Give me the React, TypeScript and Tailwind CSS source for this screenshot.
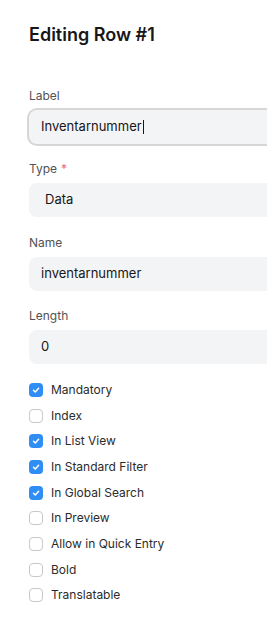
import React from 'react';

type CheckItem = { label: string; checked: boolean };

const checks: CheckItem[] = [
  { label: 'Mandatory', checked: true },
  { label: 'Index', checked: false },
  { label: 'In List View', checked: true },
  { label: 'In Standard Filter', checked: true },
  { label: 'In Global Search', checked: true },
  { label: 'In Preview', checked: false },
  { label: 'Allow in Quick Entry', checked: false },
  { label: 'Bold', checked: false },
  { label: 'Translatable', checked: false },
];

function FieldLabel({ children, required }: { children: React.ReactNode; required?: boolean }) {
  return (
    <div className="mb-1.5 h-4 text-xs leading-4 text-[#525252]">
      {children}
      {required && <span className="ml-1 text-[#f06a6a]">*</span>}
    </div>
  );
}

function Checkbox({ item }: { item: CheckItem }) {
  return (
    <div className="flex h-[25.7px] items-center gap-2">
      {item.checked ? (
        <span className="flex h-[14px] w-[14px] items-center justify-center rounded-[4px] bg-[#2f8ef4]">
          <svg width="10" height="10" viewBox="0 0 10 10" fill="none">
            <path d="M2.5 5.2 4.3 7 7.6 3.3" stroke="white" strokeWidth="1.5" strokeLinecap="round" strokeLinejoin="round" />
          </svg>
        </span>
      ) : (
        <span className="h-[14px] w-[14px] rounded-[4px] border border-[#c8c8c8] bg-white" />
      )}
      <span className="text-xs leading-4 text-[#2b2b2b]">{item.label}</span>
    </div>
  );
}

export default function App() {
  return (
    <div className="h-[623px] w-[267px] overflow-hidden bg-white" style={{ fontFamily: 'Inter, "Noto Sans", sans-serif' }}>
      <div className="w-[380px] pl-[29px] pt-[20.5px]">
        <h1 className="text-lg leading-7 font-semibold text-[#171717]">Editing Row #1</h1>

        <div className="mt-[39px] flex flex-col gap-[17.5px]">
          <div>
            <FieldLabel>Label</FieldLabel>
            <div className="flex h-[34px] items-center rounded-lg bg-[#f3f4f6] px-3 text-[13px] text-[#171717] ring-2 ring-[#d6d6d6]">
              Inventarnummer
              <span className="ml-px h-[14px] w-px bg-[#171717]" />
            </div>
          </div>
          <div>
            <FieldLabel required>Type</FieldLabel>
            <div className="flex h-[34px] items-center rounded-lg bg-[#f3f4f6] pl-4 text-[13px] text-[#171717]">Data</div>
          </div>
          <div>
            <FieldLabel>Name</FieldLabel>
            <div className="flex h-[34px] items-center rounded-lg bg-[#f3f4f6] px-3 text-[13px] text-[#171717]">inventarnummer</div>
          </div>
          <div>
            <FieldLabel>Length</FieldLabel>
            <div className="flex h-[34px] items-center rounded-lg bg-[#f3f4f6] px-3 text-[13px] text-[#171717]">0</div>
          </div>
        </div>

        <div className="mt-[13px] flex flex-col">
          {checks.map((c) => (
            <Checkbox key={c.label} item={c} />
          ))}
        </div>
      </div>
    </div>
  );
}
